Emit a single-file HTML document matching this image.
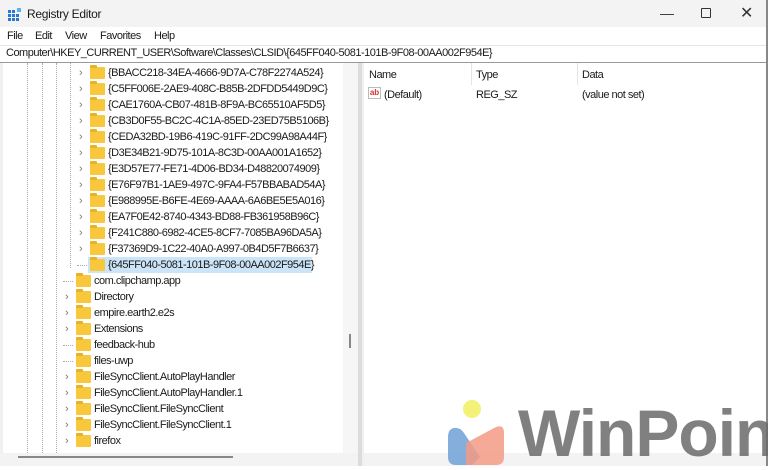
<!DOCTYPE html><html><head><meta charset="utf-8"><style>
*{margin:0;padding:0;box-sizing:border-box}
body{width:768px;height:466px;overflow:hidden;background:#fff;font-family:"Liberation Sans","DejaVu Sans",sans-serif;font-size:11px;letter-spacing:-0.5px;color:#1a1a1a;position:relative}
.a{position:absolute;white-space:nowrap}
.row{position:absolute;height:16px;line-height:16px;white-space:nowrap}
.fold{position:absolute;width:15px;height:12px;top:2px;background:#f8c73b;border-radius:1px}
.fold:before{content:"";position:absolute;left:0;top:-2px;width:7px;height:3px;background:#e9b12a;border-radius:1px 1px 0 0}
.chev{position:absolute;top:0;color:#777;font-size:11px}
.vl{position:absolute;top:63px;height:390px;border-left:1px dotted #aaa}
</style></head><body>
<div class="a" style="left:0;top:0;width:766px;height:27px;background:#f3f3f3"></div>
<svg class="a" style="left:8px;top:7px" width="14" height="14"><rect x="0" y="3" width="3" height="3" fill="#2b78d0"/><rect x="4" y="3" width="3" height="3" fill="#2b78d0"/><rect x="0" y="7" width="3" height="3" fill="#2b78d0"/><rect x="4" y="7" width="3" height="3" fill="#2b78d0"/><rect x="8" y="7" width="3" height="3" fill="#2b78d0"/><rect x="0" y="11" width="3" height="3" fill="#2b78d0"/><rect x="4" y="11" width="3" height="3" fill="#2b78d0"/><rect x="8" y="11" width="3" height="3" fill="#2b78d0"/><rect x="9" y="1" width="4" height="4" fill="#5bb0f0"/></svg>
<div class="a" style="left:27px;top:7px;font-size:12px;letter-spacing:-0.3px">Registry Editor</div>
<div class="a" style="left:660px;top:5px;font-size:14px;color:#333">&#8212;</div>
<div class="a" style="left:701px;top:8px;width:10px;height:10px;border:1px solid #333;border-radius:1px"></div>
<div class="a" style="left:740px;top:3px;font-size:16px;color:#333">&#10005;</div>
<div class="a" style="left:0;top:27px;width:766px;height:18px;background:#fff"></div>
<div class="a" style="left:7px;top:30px">File</div><div class="a" style="left:35px;top:30px">Edit</div><div class="a" style="left:65px;top:30px">View</div><div class="a" style="left:100px;top:30px">Favorites</div><div class="a" style="left:154px;top:30px">Help</div>
<div class="a" style="left:0;top:45px;width:766px;height:18px;border-bottom:1px solid #999;border-top:1px solid #e5e5e5;background:#fff"></div>
<div class="a" style="left:6px;top:47px">Computer\HKEY_CURRENT_USER\Software\Classes\CLSID\{645FF040-5081-101B-9F08-00AA002F954E}</div>
<div class="a" style="left:0;top:63px;width:3px;height:403px;background:#f0f0f0"></div>
<div class="vl" style="left:27px"></div><div class="vl" style="left:42px"></div><div class="vl" style="left:56px"></div><div class="vl" style="left:70px;top:63px;height:205px"></div>
<div class="a" style="left:343px;top:63px;width:15px;height:390px;background:#f6f6f6"></div>
<div class="a" style="left:349px;top:334px;width:2px;height:14px;background:#888"></div>
<div class="a" style="left:358px;top:63px;width:4px;height:403px;background:#dcdcdc"></div>
<div class="a" style="left:362px;top:63px;width:2px;height:403px;background:#f0f0f0"></div>
<div class="a" style="left:0;top:453px;width:358px;height:13px;background:#f3f3f3"></div>
<div class="a" style="left:18px;top:456px;width:215px;height:2px;background:#888"></div>
<div class="a" style="left:364px;top:453px;width:404px;height:13px;background:#f3f3f3"></div>
<div class="a" style="left:766px;top:0;width:2px;height:466px;background:#888"></div>
<div class="a" style="left:88px;top:257px;width:224px;height:16px;background:#cce4f7"></div>
<div class="a" style="left:471px;top:63px;height:22px;border-left:1px solid #e5e5e5"></div>
<div class="a" style="left:577px;top:63px;height:22px;border-left:1px solid #e5e5e5"></div>
<div class="a" style="left:369px;top:69px">Name</div><div class="a" style="left:476px;top:69px">Type</div><div class="a" style="left:582px;top:69px">Data</div>
<div class="a" style="left:368px;top:87px;width:13px;height:12px;border:1px solid #bbb;background:#fff;font-size:8px;letter-spacing:0;color:#c33;font-weight:bold;line-height:9px;text-align:center">ab</div>
<div class="a" style="left:384px;top:89px">(Default)</div><div class="a" style="left:476px;top:89px">REG_SZ</div><div class="a" style="left:582px;top:89px">(value not set)</div>
<svg class="a" style="left:444px;top:397px" width="76" height="69"><circle cx="28" cy="12" r="9" fill="#f3ef6a" opacity=".9"/><path d="M4 40 Q4 32 10 31 Q16 30 20 36 L36 60 L28 68 L12 68 Q4 68 4 60Z" fill="#6fa1d6" opacity=".85"/><path d="M22 46 L52 30 Q60 27 60 36 L60 60 Q60 68 52 68 L22 68Z" fill="#f39a85" opacity=".85"/></svg>
<div class="a" style="left:518px;top:400px;font-size:66px;font-weight:bold;color:#6a6a6a;opacity:.85;letter-spacing:-1px;line-height:66px">WinPoin</div>
<div id="t" style="position:absolute;left:0;top:0;width:343px;height:453px;overflow:hidden"></div>
<script>
var a=[["{BBACC218-34EA-4666-9D7A-C78F2274A524}",1,1],["{C5FF006E-2AE9-408C-B85B-2DFDD5449D9C}",1,1],["{CAE1760A-CB07-481B-8F9A-BC65510AF5D5}",1,1],["{CB3D0F55-BC2C-4C1A-85ED-23ED75B5106B}",1,1],["{CEDA32BD-19B6-419C-91FF-2DC99A98A44F}",1,1],["{D3E34B21-9D75-101A-8C3D-00AA001A1652}",1,1],["{E3D57E77-FE71-4D06-BD34-D48820074909}",1,1],["{E76F97B1-1AE9-497C-9FA4-F57BBABAD54A}",1,1],["{E988995E-B6FE-4E69-AAAA-6A6BE5E5A016}",1,1],["{EA7F0E42-8740-4343-BD88-FB361958B96C}",1,1],["{F241C880-6982-4CE5-8CF7-7085BA96DA5A}",1,1],["{F37369D9-1C22-40A0-A997-0B4D5F7B6637}",1,1],["{645FF040-5081-101B-9F08-00AA002F954E}",1,0],["com.clipchamp.app",0,0],["Directory",0,1],["empire.earth2.e2s",0,1],["Extensions",0,1],["feedback-hub",0,0],["files-uwp",0,0],["FileSyncClient.AutoPlayHandler",0,1],["FileSyncClient.AutoPlayHandler.1",0,1],["FileSyncClient.FileSyncClient",0,1],["FileSyncClient.FileSyncClient.1",0,1],["firefox",0,1]];
var h="";a.forEach(function(r,i){var y=65+i*16,x=r[1]?90:76;
if(r[2])h+='<div class="row chev" style="left:'+(x-11)+'px;top:'+y+'px">&#x203A;</div>';else h+='<div class="a" style="left:'+(x-13)+'px;top:'+(y+8)+'px;width:10px;border-top:1px dotted #aaa"></div>';
h+='<div class="row" style="left:'+x+'px;top:'+y+'px;width:16px"><div class="fold"></div></div><div class="row" style="left:'+(x+18)+'px;top:'+y+'px">'+r[0]+'</div>';});
document.getElementById("t").innerHTML=h;
</script>
</body></html>
